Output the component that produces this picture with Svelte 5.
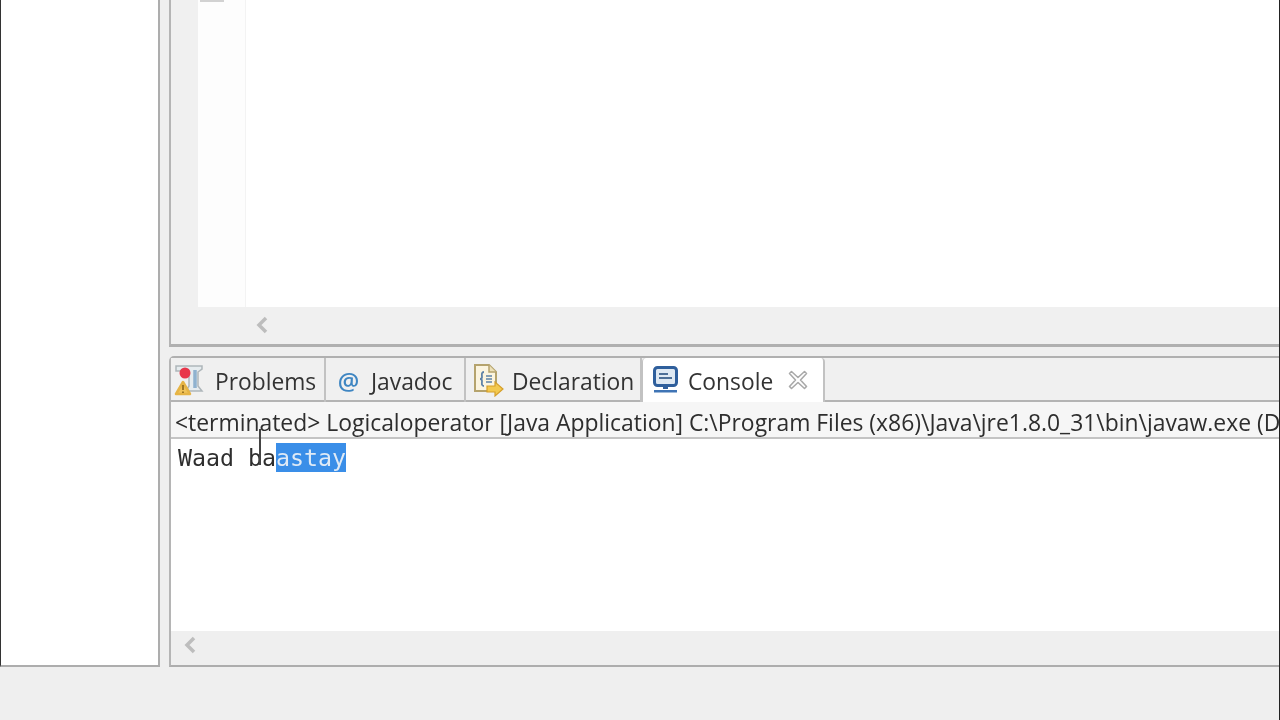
<script>
    const tabs = [
        { id: 'problems', label: 'Problems' },
        { id: 'javadoc', label: 'Javadoc' },
        { id: 'declaration', label: 'Declaration' },
        { id: 'console', label: 'Console', active: true },
    ];
</script>

<div class="window">
    <div class="main">
        <aside class="explorer"></aside>

        <div class="workbench">
            <section class="editor">
                <div class="editor-body">
                    <div class="ruler"><span class="line-no"></span></div>
                    <div class="code"></div>
                </div>
                <div class="hscroll editor-scroll">
                    <svg class="arrow" width="14" height="18" viewBox="0 0 14 18">
                        <path d="M11 2 L4 9 L11 16" fill="none" stroke="#bdbdbd" stroke-width="3.5" />
                    </svg>
                </div>
            </section>

            <section class="views">
                <div class="tabbar">
                    {#each tabs as tab}
                        <div class="tab {tab.id}" class:active={tab.active}>
                            {#if tab.id === 'problems'}
                                <svg class="icon" width="32" height="34" viewBox="0 0 32 34">
                                    <path d="M2 3h26v3l-4 3v14l4 5H12l3-5V12L10 8H2z" fill="#e6ecef" stroke="#aeb6ba" stroke-width="1.5" />
                                    <path d="M21 7v18" stroke="#8fb2cf" stroke-width="3.5" />
                                    <circle cx="11" cy="10" r="5.5" fill="#e8364a" />
                                    <path d="M9 19 L16 31 H2 Z" fill="#f0c35a" stroke="#e6b445" stroke-width="2.5" stroke-linejoin="round" />
                                    <path d="M9 22v5M9 28.5v1.5" stroke="#8a6418" stroke-width="1.6" />
                                </svg>
                            {:else if tab.id === 'javadoc'}
                                <span class="at">@</span>
                            {:else if tab.id === 'declaration'}
                                <svg class="icon" width="32" height="34" viewBox="0 0 32 34">
                                    <path d="M2 2h14l7 7v19H2z" fill="#fbf4df" stroke="#b5a36d" stroke-width="2" />
                                    <path d="M16 2v7h7" fill="#ece0b8" stroke="#b5a36d" stroke-width="1.5" />
                                    <path d="M11 9c-3 0-2 3-2 5s-2 2-2 2 2 0 2 2-1 5 2 5" fill="none" stroke="#5f83a8" stroke-width="1.8" />
                                    <path d="M13 13h6M13 16h6M13 19h6" stroke="#5f83a8" stroke-width="1.5" />
                                    <path d="M14 23h8v-4l8 7-8 7v-4h-8z" fill="#f3c94f" stroke="#d59f2a" stroke-width="1.2" />
                                </svg>
                            {:else}
                                <svg class="icon" width="28" height="28" viewBox="0 0 28 28">
                                    <rect x="2.5" y="1.5" width="22" height="18" rx="3" fill="#dfe9f3" stroke="#2f5f9c" stroke-width="3" />
                                    <path d="M7 8h9M7 12h13" stroke="#4d6f97" stroke-width="1.8" />
                                    <path d="M11 21h5v2h-5z" fill="#2f5f9c" />
                                    <path d="M2 24h23v2.5H2z" fill="#3f74b5" />
                                </svg>
                            {/if}
                            <span class="tab-label">{tab.label}</span>
                            {#if tab.active}
                                <svg class="close" width="24" height="24" viewBox="0 0 24 24">
                                    <path d="M3.5 5.5 L5.5 3.5 L12 9.5 L18.5 3.5 L20.5 5.5 L14.5 12 L20.5 18.5 L18.5 20.5 L12 14.5 L5.5 20.5 L3.5 18.5 L9.5 12 Z" fill="#fff" stroke="#a9a9a9" stroke-width="1.6" stroke-linejoin="round" />
                                </svg>
                            {/if}
                        </div>
                    {/each}
                </div>

                <div class="console-body">
                    <div class="status">&lt;terminated&gt; Logicaloperator [Java Application] C:\Program Files (x86)\Java\jre1.8.0_31\bin\javaw.exe (D</div>
                    <div class="output">Waad ba<span class="selected">astay</span></div>
                    <div class="ibeam"></div>
                </div>

                <div class="hscroll console-scroll">
                    <svg class="arrow" width="14" height="18" viewBox="0 0 14 18">
                        <path d="M11 2 L4 9 L11 16" fill="none" stroke="#bdbdbd" stroke-width="3.5" />
                    </svg>
                </div>
            </section>
        </div>
    </div>
    <div class="statusbar"></div>
</div>

<style>
    :global(body) {
        margin: 0;
        background: #efefef;
        overflow: hidden;
    }

    .window {
        width: 1280px;
        height: 720px;
        display: flex;
        flex-direction: column;
        background: #efefef;
        box-sizing: border-box;
        border-right: 1px solid #222;
        font-family: "Open Sans", "Noto Sans", sans-serif;
        overflow: hidden;
        filter: blur(0.6px);
    }

    .main {
        display: flex;
        height: 667px;
        flex-shrink: 0;
    }

    .explorer {
        width: 160px;
        box-sizing: border-box;
        background: #fff;
        border-left: 1px solid #333;
        border-right: 2px solid #adadad;
        border-bottom: 2px solid #adadad;
    }

    .workbench {
        flex: 1;
        margin-left: 9px;
        display: flex;
        flex-direction: column;
        min-width: 0;
    }

    .editor {
        height: 347px;
        box-sizing: border-box;
        border-left: 2px solid #b5b5b5;
        border-bottom: 3px solid #b0b0b0;
        display: flex;
        flex-direction: column;
        background: #f0f0f0;
        flex-shrink: 0;
    }

    .editor-body {
        height: 307px;
        display: flex;
        padding-left: 27px;
        flex-shrink: 0;
    }

    .ruler {
        width: 47px;
        background: #fdfdfd;
        border-right: 1px solid #f3f3f3;
        position: relative;
    }

    .line-no {
        display: block;
        width: 24px;
        height: 2px;
        margin-left: 2px;
        background: #d2d2d2;
    }

    .code {
        flex: 1;
        background: #fff;
    }

    .hscroll {
        flex: 1;
        display: flex;
        align-items: center;
    }

    .editor-scroll {
        padding-left: 84px;
        padding-bottom: 2px;
    }

    .views {
        flex: 1;
        margin-top: 9px;
        box-sizing: border-box;
        display: flex;
        flex-direction: column;
        border-left: 2px solid #b5b5b5;
        border-top: 2px solid #b0b0b0;
        border-bottom: 2px solid #adadad;
        border-top-left-radius: 5px;
        min-height: 0;
    }

    .tabbar {
        height: 44px;
        display: flex;
        flex-shrink: 0;
        box-sizing: border-box;
        border-bottom: 2px solid #b4b4b4;
        background: #f0f0f0;
    }

    .tab {
        display: flex;
        align-items: center;
        box-sizing: border-box;
        height: 44px;
        border-right: 2px solid #c2c2c2;
        color: #333;
        font-size: 22.8px;
        white-space: nowrap;
    }

    .tab.problems { width: 155px; padding-left: 3px; }
    .tab.javadoc { width: 140px; padding-left: 11px; }
    .tab.declaration { width: 176px; padding-left: 7px; }

    .tab.console {
        width: 183px;
        padding-left: 9px;
        background: #fff;
        border-right: 2px solid #c2c2c2;
        border-left: 1px solid #c2c2c2;
        border-top-left-radius: 4px;
        border-top-right-radius: 4px;
    }

    .tab.active {
        border-bottom: none;
    }

    .tab-label {
        padding-top: 2px;
    }

    .icon {
        flex-shrink: 0;
    }

    .problems .tab-label { margin-left: 9px; }
    .javadoc .tab-label { margin-left: 11px; }
    .declaration .tab-label { margin-left: 7px; }
    .console .tab-label { margin-left: 8px; }

    .at {
        color: #3f86c2;
        font-size: 24px;
        font-weight: 600;
        width: 23px;
        text-align: center;
    }

    .close {
        margin-left: 13px;
        flex-shrink: 0;
    }

    .console-body {
        height: 229px;
        position: relative;
        background: #fff;
        flex-shrink: 0;
    }

    .status {
        height: 37px;
        box-sizing: border-box;
        padding-top: 3px;
        padding-left: 4px;
        line-height: 36px;
        font-size: 22.9px;
        color: #2e2e2e;
        background: #f6f6f6;
        border-bottom: 2px solid #c4c4c4;
        white-space: nowrap;
        overflow: hidden;
    }

    .output {
        margin-top: 4px;
        padding-left: 7px;
        height: 29px;
        line-height: 29px;
        font-family: "DejaVu Sans Mono", monospace;
        font-size: 23.25px;
        color: #2e2e2e;
        white-space: pre;
    }

    .selected {
        background: #3a8ee8;
        color: #dfeaf6;
        display: inline-block;
        height: 29px;
    }

    .ibeam {
        position: absolute;
        left: 88px;
        top: 27px;
        width: 2px;
        height: 36px;
        background: #444;
    }

    .console-scroll {
        margin: 0 0 6px 5px;
        padding-left: 7px;
        background: #efefef;
    }

    .statusbar {
        flex: 1;
        background: #efefef;
    }
</style>
